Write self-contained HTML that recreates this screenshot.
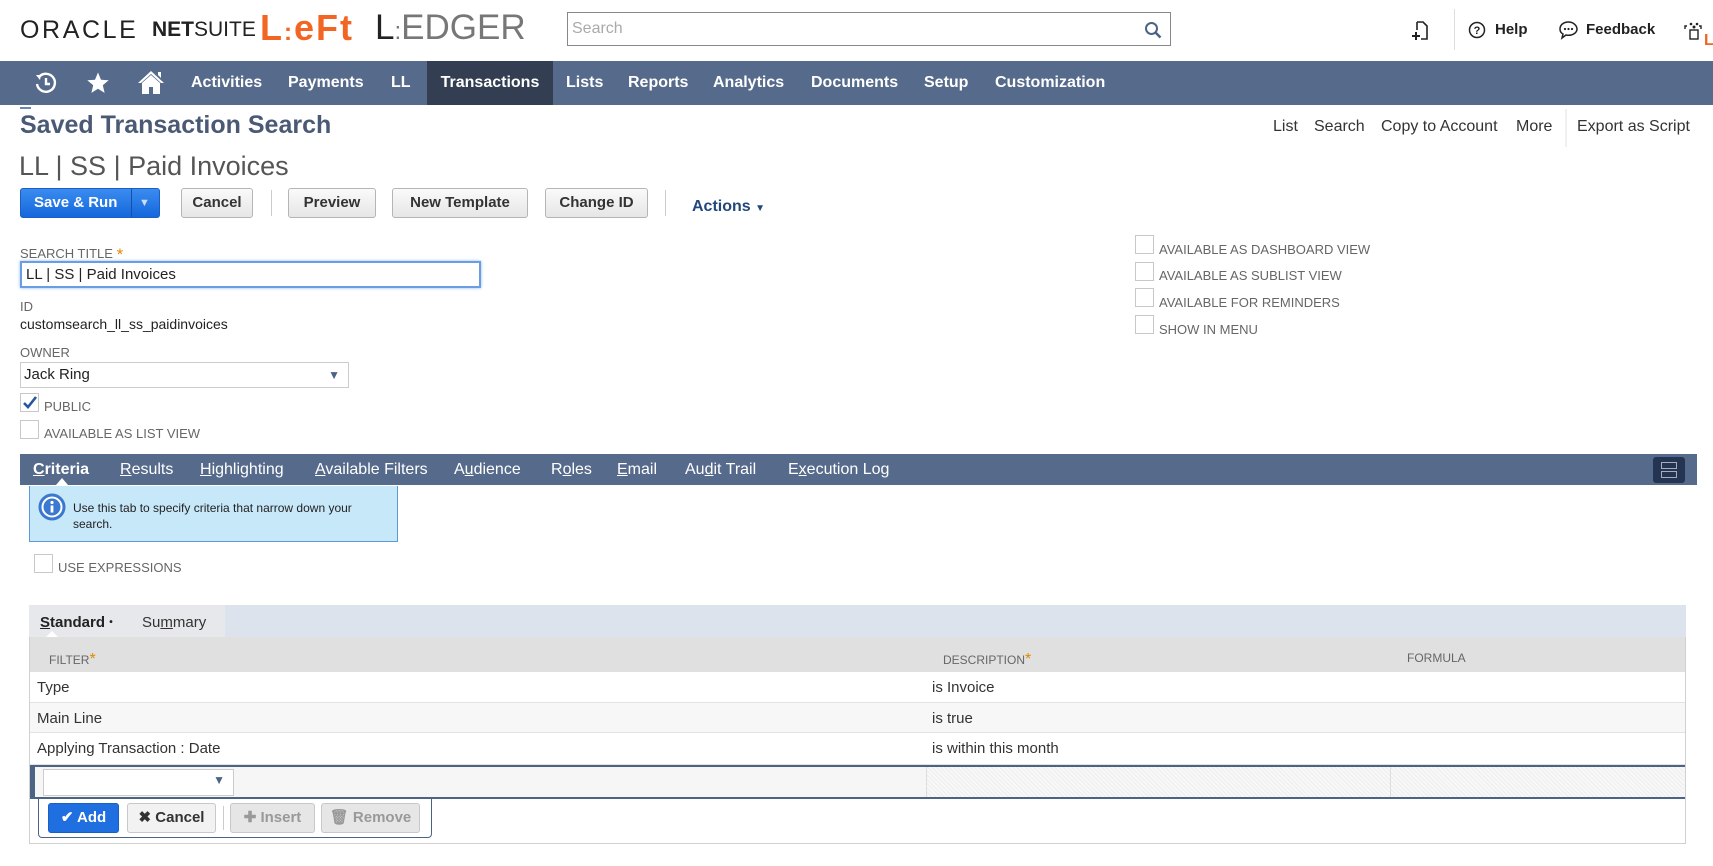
<!DOCTYPE html>
<html><head><meta charset="utf-8"><style>
*{box-sizing:border-box;margin:0;padding:0}
body{width:1713px;height:866px;position:relative;overflow:hidden;background:#fff;font-family:"Liberation Sans",sans-serif;color:#333}
.a{position:absolute;white-space:nowrap}
.nav{position:absolute;left:0;top:61px;width:1713px;height:44px;background:#566a8b}
.ni{position:absolute;top:0;height:44px;line-height:44px;color:#fff;font-weight:bold;font-size:16px}
.btn{position:absolute;top:188px;height:30px;border:1px solid #b5b5b5;border-radius:3px;background:linear-gradient(#fafafa,#e6e6e6);font-size:15px;font-weight:bold;color:#333;text-align:center;line-height:28px}
.lnk{position:absolute;top:118px;font-size:16px;color:#333}
.lbl{position:absolute;font-size:13px;color:#666;white-space:nowrap}
.cb{position:absolute;width:19px;height:19px;border:1px solid #c8c8c8;background:#fff}
.tab{position:absolute;top:454px;height:31px;line-height:31px;color:#fff;font-size:16px}
.tab u{text-decoration:underline}
.row{position:absolute;left:30px;width:1655px;border-bottom:1px solid #e3e3e3;font-size:15px}
.row span{position:absolute;top:7px}
.sb{position:absolute;top:803px;height:30px;border:1px solid #c8c8c8;border-radius:3px;font-size:15px;font-weight:bold;line-height:28px;text-align:center}
</style></head><body>
<!-- header -->
<div class="a" style="left:20px;top:15px;font-size:25px;letter-spacing:2.6px;color:#222;line-height:30px">ORACLE</div>
<div class="a" style="left:152px;top:17px;font-size:21px;color:#222;line-height:26px"><b>NET</b>SUITE</div>
<div class="a" style="left:260px;top:10px;font-size:36px;font-weight:bold;color:#f26522;line-height:36px;letter-spacing:2px">L<span style="font-size:24px">:</span>eFt</div>
<div class="a" style="left:375px;top:10px;font-size:35px;color:#777;line-height:36px"><span style="color:#222">L</span><span style="font-size:24px">:</span>EDGER</div>
<div class="a" style="left:567px;top:12px;width:604px;height:34px;border:1px solid #888;background:#fff"><span style="position:absolute;left:4px;top:7px;font-size:16px;color:#aaa">Search</span>
<svg style="position:absolute;right:8px;top:8px" width="18" height="18" viewBox="0 0 18 18"><circle cx="7.5" cy="7.5" r="5.5" fill="none" stroke="#4d6385" stroke-width="2"/><path d="M11.5 11.5l5 5" stroke="#4d6385" stroke-width="2.5"/></svg></div>
<svg class="a" style="left:1410px;top:20px" width="20" height="22" viewBox="0 0 20 22"><path d="M7 2h6l4 4v13h-6M7 2v8" fill="none" stroke="#222" stroke-width="1.6"/><path d="M6 12v8M2 16h8" stroke="#222" stroke-width="2"/></svg>
<div class="a" style="left:1454px;top:9px;width:1px;height:41px;background:#ddd"></div>
<svg class="a" style="left:1468px;top:21px" width="18" height="18"><circle cx="9" cy="9" r="7.5" fill="none" stroke="#222" stroke-width="1.5"/><text x="9" y="13" font-size="11" font-weight="bold" text-anchor="middle" fill="#222" font-family="Liberation Sans">?</text></svg>
<div class="a" style="left:1495px;top:21px;font-size:15px;font-weight:bold;color:#222">Help</div>
<svg class="a" style="left:1558px;top:20px" width="21" height="20"><path d="M10.5 2C5.5 2 2 5 2 9c0 2 1 4 3 5l-1 4 4-3c1 .3 1.5.3 2.5.3 5 0 8.5-3 8.5-6.3S15.5 2 10.5 2z" fill="none" stroke="#222" stroke-width="1.5"/><circle cx="7" cy="9" r="1.1" fill="#222"/><circle cx="10.5" cy="9" r="1.1" fill="#222"/><circle cx="14" cy="9" r="1.1" fill="#222"/></svg>
<div class="a" style="left:1586px;top:21px;font-size:15px;font-weight:bold;color:#222">Feedback</div>
<svg class="a" style="left:1683px;top:20px" width="22" height="22"><path d="M2 9V6h2M18 9V6h-2" fill="none" stroke="#222" stroke-width="1.4"/><circle cx="8" cy="4" r="1.3" fill="#222"/><circle cx="14" cy="4" r="1.3" fill="#222"/><circle cx="11" cy="7" r="1.5" fill="#222"/><rect x="7" y="10" width="8" height="9" fill="none" stroke="#222" stroke-width="1.4"/></svg>
<div class="a" style="left:1704px;top:32px;font-size:16px;font-weight:bold;color:#f26522">L</div>
<!-- nav -->
<div class="nav">
<svg style="position:absolute;left:34px;top:10px" width="24" height="24" viewBox="0 0 24 24"><path d="M5 6a9 9 0 1 1-2 7" fill="none" stroke="#fff" stroke-width="2.4"/><path d="M2 4l5 0-1 5z" fill="#fff"/><path d="M12 7v6h4" fill="none" stroke="#fff" stroke-width="2.4"/></svg>
<svg style="position:absolute;left:86px;top:10px" width="24" height="24" viewBox="0 0 24 24"><path d="M12 1.5l3 7.2 7.7.6-5.9 5 1.8 7.6L12 17.8l-6.6 4.1 1.8-7.6-5.9-5 7.7-.6z" fill="#fff"/></svg>
<svg style="position:absolute;left:137px;top:8px" width="28" height="26" viewBox="0 0 28 26"><path d="M14 2L1 14h3l10-9 10 9h3z" fill="#fff"/><path d="M21 3h3v6l-3-3z" fill="#fff"/><path d="M5 14v11h7v-7h4v7h7V14L14 6z" fill="#fff"/></svg>
<div class="ni" style="left:191px">Activities</div>
<div class="ni" style="left:288px">Payments</div>
<div class="ni" style="left:391px">LL</div>
<div class="ni" style="left:427px;width:126px;background:#333e52;text-align:center">Transactions</div>
<div class="ni" style="left:566px">Lists</div>
<div class="ni" style="left:628px">Reports</div>
<div class="ni" style="left:713px">Analytics</div>
<div class="ni" style="left:811px">Documents</div>
<div class="ni" style="left:924px">Setup</div>
<div class="ni" style="left:995px">Customization</div>
</div>
<div class="a" style="left:20px;top:107px;width:11px;height:2px;background:#6d87b5"></div>
<div class="a" style="left:20px;top:111px;font-size:25px;font-weight:bold;color:#4a5a75">Saved Transaction Search</div>
<div class="a" style="left:19px;top:151px;font-size:27px;color:#555">LL | SS | Paid Invoices</div>
<!-- right links -->
<div class="lnk" style="left:1273px">List</div>
<div class="lnk" style="left:1314px">Search</div>
<div class="lnk" style="left:1381px">Copy to Account</div>
<div class="lnk" style="left:1516px">More</div>
<div class="a" style="left:1565px;top:109px;width:2px;height:38px;background:#f0f0f0"></div>
<div class="lnk" style="left:1577px">Export as Script</div>
<!-- buttons -->
<div class="btn" style="left:20px;width:140px;background:linear-gradient(#3a8cf0,#1567dc);border-color:#1a5fc4;color:#fff;text-align:left;padding-left:13px">Save &amp; Run<span style="position:absolute;left:110px;top:0;width:1px;height:28px;background:#1350a8"></span><span style="position:absolute;left:118px;font-size:11px;color:#cde">▼</span></div>
<div class="btn" style="left:181px;width:72px">Cancel</div>
<div class="a" style="left:271px;top:190px;width:1px;height:26px;background:#ccc"></div>
<div class="btn" style="left:288px;width:88px">Preview</div>
<div class="btn" style="left:392px;width:136px">New Template</div>
<div class="btn" style="left:545px;width:103px">Change ID</div>
<div class="a" style="left:665px;top:190px;width:1px;height:26px;background:#ccc"></div>
<div class="a" style="left:692px;top:198px;font-size:16px;font-weight:bold;color:#22477c">Actions <span style="font-size:10px">▼</span></div>
<!-- form left -->
<div class="lbl" style="left:20px;top:243px">SEARCH TITLE <span style="color:#e08a00;font-size:17px;position:relative;top:2px">*</span></div>
<div class="a" style="left:20px;top:261px;width:461px;height:27px;border:2px solid #6a9ee0;box-shadow:0 0 3px #8bb8ef;font-size:15px;line-height:23px;padding-left:4px;color:#222">LL | SS | Paid Invoices</div>
<div class="lbl" style="left:20px;top:299px">ID</div>
<div class="a" style="left:20px;top:316px;font-size:14px;color:#222">customsearch_ll_ss_paidinvoices</div>
<div class="lbl" style="left:20px;top:345px">OWNER</div>
<div class="a" style="left:20px;top:362px;width:329px;height:26px;border:1px solid #ccc;font-size:15px;line-height:24px;padding-left:3px;color:#222">Jack Ring<span style="position:absolute;right:8px;top:0;font-size:12px;color:#4d6385">▼</span></div>
<div class="cb" style="left:20px;top:393px"><svg width="17" height="17"><path d="M3 9l4 4 8-10" fill="none" stroke="#2656a0" stroke-width="2.6"/></svg></div>
<div class="lbl" style="left:44px;top:399px">PUBLIC</div>
<div class="cb" style="left:20px;top:420px"></div>
<div class="lbl" style="left:44px;top:426px">AVAILABLE AS LIST VIEW</div>
<!-- right checkboxes -->
<div class="cb" style="left:1135px;top:235px"></div><div class="lbl" style="left:1159px;top:242px">AVAILABLE AS DASHBOARD VIEW</div>
<div class="cb" style="left:1135px;top:262px"></div><div class="lbl" style="left:1159px;top:268px">AVAILABLE AS SUBLIST VIEW</div>
<div class="cb" style="left:1135px;top:288px"></div><div class="lbl" style="left:1159px;top:295px">AVAILABLE FOR REMINDERS</div>
<div class="cb" style="left:1135px;top:315px"></div><div class="lbl" style="left:1159px;top:322px">SHOW IN MENU</div>
<!-- tab bar -->
<div class="a" style="left:20px;top:454px;width:1677px;height:31px;background:#566a8b"></div>
<div class="tab" style="left:33px;font-weight:bold"><u>C</u>riteria</div>
<div class="tab" style="left:120px"><u>R</u>esults</div>
<div class="tab" style="left:200px"><u>H</u>ighlighting</div>
<div class="tab" style="left:315px"><u>A</u>vailable Filters</div>
<div class="tab" style="left:454px">A<u>u</u>dience</div>
<div class="tab" style="left:551px">R<u>o</u>les</div>
<div class="tab" style="left:617px"><u>E</u>mail</div>
<div class="tab" style="left:685px">Au<u>d</u>it Trail</div>
<div class="tab" style="left:788px">E<u>x</u>ecution Log</div>
<div class="a" style="left:56px;top:478px;width:0;height:0;border-left:6px solid transparent;border-right:6px solid transparent;border-bottom:7px solid #fff"></div>
<div class="a" style="left:1653px;top:457px;width:32px;height:26px;background:#243553;border-radius:3px"><div style="position:absolute;left:8px;top:5px;width:16px;height:7px;border:1.5px solid #aab"></div><div style="position:absolute;left:8px;top:14px;width:16px;height:7px;border:1.5px solid #aab"></div></div>
<!-- info -->
<div class="a" style="left:29px;top:486px;width:369px;height:56px;background:#c7e8f9;border:1px solid #5b9bd5;border-top:none"></div>
<svg class="a" style="left:38px;top:493px" width="28" height="28"><circle cx="14" cy="14" r="12" fill="#fff" stroke="#3b78d0" stroke-width="3"/><circle cx="14" cy="14" r="8.5" fill="#3b78d0"/><circle cx="14" cy="9.5" r="1.6" fill="#fff"/><rect x="12.6" y="12.5" width="2.8" height="7" fill="#fff"/></svg>
<div class="a" style="left:73px;top:500px;font-size:12px;line-height:16px;color:#222">Use this tab to specify criteria that narrow down your<br>search.</div>
<div class="cb" style="left:34px;top:554px"></div>
<div class="lbl" style="left:58px;top:560px">USE EXPRESSIONS</div>
<!-- sublist -->
<div class="a" style="left:29px;top:605px;width:1657px;height:239px;border:1px solid #d0d0d0;border-top:none"></div>
<div class="a" style="left:29px;top:605px;width:1657px;height:32px;background:#dce3ed"></div>
<div class="a" style="left:29px;top:605px;width:196px;height:32px;background:#e6e8eb"></div>
<div class="a" style="left:40px;top:614px;font-size:15px;font-weight:bold;color:#222"><u>S</u>tandard <span style="font-size:10px;position:relative;top:-2px">•</span></div>
<div class="a" style="left:142px;top:614px;font-size:15px;color:#333">Su<u>m</u>mary</div>
<div class="a" style="left:46px;top:631px;width:0;height:0;border-left:6px solid transparent;border-right:6px solid transparent;border-bottom:6px solid #fff"></div>
<div class="a" style="left:30px;top:637px;width:1655px;height:35px;background:#e0e0e0"></div>
<div class="lbl" style="left:49px;top:651px;font-size:12px">FILTER<span style="color:#e08a00;font-size:16px">*</span></div>
<div class="lbl" style="left:943px;top:651px;font-size:12px">DESCRIPTION<span style="color:#e08a00;font-size:16px">*</span></div>
<div class="lbl" style="left:1407px;top:651px;font-size:12px">FORMULA</div>
<div class="row" style="top:672px;height:31px;background:#fff"><span style="left:7px">Type</span><span style="left:902px">is Invoice</span></div>
<div class="row" style="top:703px;height:30px;background:#f7f7f7"><span style="left:7px">Main Line</span><span style="left:902px">is true</span></div>
<div class="row" style="top:733px;height:32px;background:#fff"><span style="left:7px">Applying Transaction : Date</span><span style="left:902px">is within this month</span></div>
<div class="a" style="left:30px;top:765px;width:1655px;height:34px;background:#f6f6f6;border-top:2px solid #4d6385;border-bottom:2px solid #4d6385"></div>
<div class="a" style="left:30px;top:765px;width:5px;height:34px;background:#4d6385"></div>
<div class="a" style="left:926px;top:767px;width:758px;height:30px;background:repeating-linear-gradient(45deg,#eee 0 1px,#f8f8f8 1px 3px);border-left:1px solid #ddd"></div>
<div class="a" style="left:1390px;top:767px;width:1px;height:30px;background:#ddd"></div>
<div class="a" style="left:43px;top:769px;width:191px;height:27px;background:#fff;border:1px solid #ccc"><span style="position:absolute;right:8px;top:3px;font-size:12px;color:#4d6385">▼</span></div>
<div class="a" style="left:38px;top:799px;width:394px;height:39px;border:1px solid #4d6385;border-top:none;border-radius:0 0 4px 4px"></div>
<div class="sb" style="left:48px;width:71px;background:#1f6fe0;border-color:#1a5fc4;color:#fff">✔ Add</div>
<div class="sb" style="left:127px;width:89px;background:#f2f2f2;color:#333">✖ Cancel</div>
<div class="a" style="left:223px;top:806px;width:1px;height:24px;background:#ccc"></div>
<div class="sb" style="left:230px;width:85px;background:#e6e6e6;color:#999">✚ Insert</div>
<div class="sb" style="left:321px;width:99px;background:#e6e6e6;color:#999">🗑 Remove</div>
</body></html>
